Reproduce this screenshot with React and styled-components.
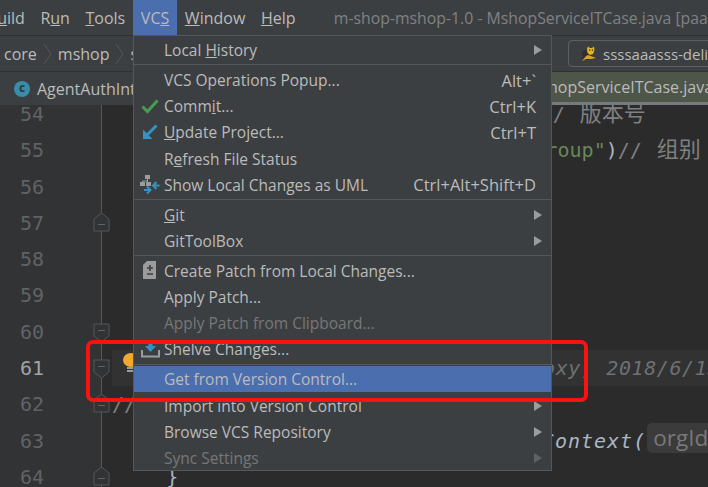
import React from 'react';
import styled, { createGlobalStyle } from 'styled-components';

const GlobalStyle = createGlobalStyle`
  html, body {
    margin: 0;
    padding: 0;
    background: #2b2b2b;
  }
`;

const uiFont = `"Open Sans", "Noto Sans", sans-serif`;
const codeFont = `"DejaVu Sans Mono", "Noto Sans CJK SC", monospace`;

const CheckIcon = () => (
  <svg width="18" height="16" viewBox="0 0 18 16">
    <path d="M1.5 8.5 L6.5 13.5 L16.5 2.5" fill="none" stroke="#499c54" strokeWidth="3" />
  </svg>
);

const UpdateIcon = () => (
  <svg width="18" height="16" viewBox="0 0 18 16">
    <path d="M15.5 1.5 L4 13" fill="none" stroke="#3592c4" strokeWidth="3" />
    <path d="M2 5.5 V15 H11.5 Z" fill="#3592c4" />
  </svg>
);

const UmlIcon = () => (
  <svg width="20" height="20" viewBox="0 0 20 20">
    <rect x="5" y="0" width="5" height="4" fill="#9a9c9e" />
    <rect x="0" y="7" width="5" height="4" fill="#9a9c9e" />
    <rect x="6" y="7" width="5" height="4" fill="#9a9c9e" />
    <path d="M7.5 4 V6 H2.5 V7 M7.5 6 V7" fill="none" stroke="#9a9c9e" strokeWidth="1" />
    <path d="M19.5 10.5 H14 M16.5 7 L13 10.5 L16.5 14" fill="none" stroke="#3592c4" strokeWidth="2" />
    <path d="M4 15 H9.5 M7 11.5 L10.5 15 L7 18.5" fill="none" stroke="#3592c4" strokeWidth="2" />
  </svg>
);

const PatchIcon = () => (
  <svg width="14" height="19" viewBox="0 0 14 19">
    <path d="M4 0 H13 V18 H0 V4 Z" fill="#9a9c9e" />
    <path d="M7 4 V10 M4 7 H10 M4 13 H10" fill="none" stroke="#3c3f41" strokeWidth="1.6" />
  </svg>
);

const ShelveIcon = () => (
  <svg width="19" height="17" viewBox="0 0 19 17">
    <path d="M1 9 V15.5 H18 V9" fill="none" stroke="#9a9c9e" strokeWidth="2" />
    <path d="M7.5 0 H11.5 V5 H15 L9.5 11 L4 5 H7.5 Z" fill="#3592c4" />
  </svg>
);

const icons = {
  check: <CheckIcon />,
  update: <UpdateIcon />,
  uml: <UmlIcon />,
  patch: <PatchIcon />,
  shelve: <ShelveIcon />,
};

const TomcatIcon = () => (
  <svg width="19" height="16" viewBox="0 0 19 16">
    <path d="M1 14 L5 11 L4 6 L7 4 L11 6 L14 10 L18 12 L13 12 L10 14 L6 12 Z" fill="#2f2f2f" />
    <path d="M4 15 L8 10 L10 9 L13 10 L18 12 L13 13 L8 13 Z" fill="#d9a51e" />
    <path d="M9 3 L10 0.5 L12 2 L14 2 L16 0.5 L16.5 4 L15 8 L12 9 L9.5 7 Z" fill="#e6b422" />
    <circle cx="11.6" cy="4" r="0.8" fill="#2b2b2b" />
    <circle cx="14.4" cy="4" r="0.8" fill="#2b2b2b" />
  </svg>
);

const Chevron = () => (
  <svg width="9" height="22" viewBox="0 0 9 22">
    <path d="M1 1 L8 11 L1 21" fill="none" stroke="#55585a" strokeWidth="1" />
  </svg>
);

const FoldMark = ({ dir }) => (
  <FoldSvg $dir={dir} width="17" height="20" viewBox="0 0 17 20">
    {dir === 'up' ? (
      <path d="M8.5 1 L16 7 V19 H1 V7 Z" fill="#313335" stroke="#55585a" />
    ) : (
      <path d="M1 1 H16 V13 L8.5 19 L1 13 Z" fill="#313335" stroke="#55585a" />
    )}
    <path d={dir === 'up' ? 'M5 12.5 H12' : 'M5 7.5 H12'} stroke="#606366" />
  </FoldSvg>
);

// "_" marks the mnemonic letter
const Mnemonic = ({ text }) => {
  const i = text.indexOf('_');
  if (i < 0) return text;
  return (
    <>
      {text.slice(0, i)}
      <u>{text[i + 1]}</u>
      {text.slice(i + 2)}
    </>
  );
};

const menuBar = ['B_uild', 'R_un', '_Tools', 'VC_S', '_Window', '_Help'];

const vcsMenu = [
  { label: 'Local _History', arrow: true },
  { sep: true },
  { label: 'VCS Operations Popup...', keys: 'Alt+`' },
  { label: 'Comm_it...', keys: 'Ctrl+K', icon: 'check' },
  { label: '_Update Project...', keys: 'Ctrl+T', icon: 'update' },
  { label: 'R_efresh File Status' },
  { label: 'Show Local Changes as UML', keys: 'Ctrl+Alt+Shift+D', icon: 'uml' },
  { sep: true },
  { label: '_Git', arrow: true },
  { label: 'GitToolBox', arrow: true },
  { sep: true },
  { label: 'Create Patch from Local Changes...', icon: 'patch' },
  { label: 'Apply Patch...' },
  { label: 'Apply Patch from Clipboard...', disabled: true },
  { label: 'Shelve Changes...', icon: 'shelve' },
  { sep: true },
  { label: 'Get from Version Control...', active: true },
  { label: 'Import into Version Control', arrow: true },
  { label: 'Browse VCS Repository', arrow: true },
  { label: 'Sync Settings', arrow: true, disabled: true },
];

const codeLines = [
  { n: 54, col: 36.6, parts: [['c', '/ '], ['h', '版本号']] },
  { n: 55, col: 35, parts: [['s', 'group"'], ['p', ')'], ['c', '// '], ['h', '组别']] },
  { n: 56 },
  { n: 57, fold: 'up' },
  { n: 58 },
  { n: 59 },
  { n: 60, fold: 'down' },
  { n: 61, fold: 'down', current: true, col: 35.8, parts: [['a', 'oxy, 2018/6/13 10:24']], bulb: true },
  { n: 62, fold: 'up', col: 0, parts: [['c', '//']] },
  { n: 63, col: 35.7, parts: [['m', 'Context(']], hint: 'orgId' },
  { n: 64, fold: 'up', col: 4.5, parts: [['p', '}']] },
];

export default function App() {
  return (
    <Page>
      <GlobalStyle />
      <MenuBar>
        {menuBar.map((m) => (
          <MenuTitle key={m} $open={m === 'VC_S'}>
            <Mnemonic text={m} />
          </MenuTitle>
        ))}
        <WindowTitle>m-shop-mshop-1.0 - MshopServiceITCase.java [paas-mshop]</WindowTitle>
      </MenuBar>

      <NavBar>
        <span>core</span>
        <Chevron />
        <span>mshop</span>
        <Chevron />
        <span>service</span>
        <RunConfig>
          <TomcatIcon />
          <RunName>ssssaaasss-delivery</RunName>
        </RunConfig>
      </NavBar>

      <TabBar>
        <Tab>
          <ClassBadge>c</ClassBadge>
          AgentAuthInterceptor
        </Tab>
        <ActiveTab>MshopServiceITCase.java</ActiveTab>
      </TabBar>

      <Editor>
        <Lines>
          {codeLines.map((line) => (
            <Line key={line.n}>
              <Gutter $current={line.current}>
                {line.n}
                {line.fold && <FoldMark dir={line.fold} />}
              </Gutter>
              <Code $current={line.current} $col={line.col || 0}>
                {line.bulb && <Bulb />}
                {line.parts &&
                  line.parts.map(([kind, text]) => (
                    <Token key={text} $kind={kind}>
                      {text}
                    </Token>
                  ))}
                {line.hint && <Hint>{line.hint}</Hint>}
              </Code>
            </Line>
          ))}
        </Lines>
      </Editor>

      <Dropdown>
        {vcsMenu.map((item, i) =>
          item.sep ? (
            <Separator key={i} />
          ) : (
            <MenuRow key={item.label} $active={item.active} $disabled={item.disabled}>
              <IconSlot>{item.icon && icons[item.icon]}</IconSlot>
              <RowLabel>
                <Mnemonic text={item.label} />
              </RowLabel>
              {item.keys && <Keys>{item.keys}</Keys>}
              {item.arrow && <Arrow $disabled={item.disabled} />}
            </MenuRow>
          )
        )}
      </Dropdown>

      <RedBox />
    </Page>
  );
}

const Page = styled.div`
  position: relative;
  width: 708px;
  height: 487px;
  overflow: hidden;
  display: flex;
  flex-direction: column;
  background: #2b2b2b;
  font-family: ${uiFont};
`;

const MenuBar = styled.div`
  height: 35px;
  flex: none;
  display: flex;
  align-items: stretch;
  background: #3c3f41;
  color: #bbbbbb;
  font-size: 16px;
  white-space: nowrap;
  margin-left: -21px;
`;

const MenuTitle = styled.div`
  display: flex;
  align-items: center;
  white-space: pre;
  padding: 0 7.8px;
  background: ${(p) => (p.$open ? '#4b6eaf' : 'transparent')};
`;

const WindowTitle = styled.div`
  display: flex;
  align-items: center;
  margin-left: 30.5px;
  color: #7f8284;
  font-size: 15.8px;
`;

const NavBar = styled.div`
  height: 36px;
  flex: none;
  display: flex;
  align-items: center;
  gap: 6px;
  padding-left: 4px;
  background: #3c3f41;
  border-top: 1px solid #323232;
  box-sizing: border-box;
  color: #bbbbbb;
  font-size: 16px;
  white-space: nowrap;
  overflow: hidden;
`;

const RunConfig = styled.div`
  flex: none;
  margin-left: auto;
  margin-right: -10px;
  width: 150px;
  height: 27px;
  box-sizing: border-box;
  display: flex;
  align-items: center;
  gap: 6px;
  padding-left: 9px;
  border: 1px solid #5e6060;
  border-radius: 4px;
  overflow: hidden;

  svg {
    flex: none;
  }
`;

const RunName = styled.span`
  color: #bbbbbb;
  font-size: 15px;
`;

const TabBar = styled.div`
  position: relative;
  z-index: 1;
  height: 34px;
  flex: none;
  display: flex;
  justify-content: space-between;
  background: #3c3f41;
  border-top: 1px solid #323232;
  box-sizing: border-box;
  color: #bbbbbb;
  font-size: 16px;
  white-space: nowrap;
  overflow: hidden;
`;

const Tab = styled.div`
  display: flex;
  align-items: center;
  gap: 7px;
  padding-left: 14px;
  padding-top: 1px;
`;

const ClassBadge = styled.span`
  width: 16px;
  height: 16px;
  border-radius: 50%;
  background: #3a8ca8;
  color: #2b3a40;
  font-size: 12px;
  font-weight: 700;
  line-height: 14px;
  text-align: center;
`;

const ActiveTab = styled.div`
  flex: none;
  width: 202px;
  box-sizing: border-box;
  display: flex;
  align-items: center;
  padding-left: 20px;
  background: #4e5549;
  border-bottom: 3px solid #747a80;
  overflow: hidden;
`;

const Editor = styled.div`
  flex: 1;
  min-height: 0;
`;

const Lines = styled.div`
  margin-top: -9px;
  font-family: ${codeFont};
  font-size: 20px;
  white-space: pre;
`;

const Line = styled.div`
  height: 36.3px;
  line-height: 36.3px;
  display: flex;
`;

const Gutter = styled.div`
  position: relative;
  flex: none;
  width: 102px;
  box-sizing: border-box;
  padding-left: 20px;
  background: #313335;
  border-right: 1px solid #555759;
  color: ${(p) => (p.$current ? '#a4a3a3' : '#606366')};
`;

const FoldSvg = styled.svg`
  position: absolute;
  left: 93px;
  top: ${(p) => (p.$dir === 'up' ? '7px' : '9px')};
`;

const Code = styled.div`
  position: relative;
  flex: 1;
  min-width: 0;
  display: flex;
  align-items: center;
  margin-left: 10px;
  padding-left: ${(p) => p.$col}ch;
  background: ${(p) => (p.$current ? '#323232' : 'transparent')};
  height: 36px;
`;

const tokenColors = { c: '#808080', h: '#808080', s: '#6a8759', p: '#a9b7c6', a: '#6e7072', m: '#a9b7c6' };

const Token = styled.span`
  color: ${(p) => tokenColors[p.$kind]};
  font-style: ${(p) => (p.$kind === 'a' || p.$kind === 'm' ? 'italic' : 'normal')};
  font-size: ${(p) => (p.$kind === 'h' ? '22px' : 'inherit')};
  margin-left: ${(p) => (p.$kind === 'h' ? '3px' : '0')};
  letter-spacing: ${(p) => (p.$kind === 'a' ? '0.6px' : p.$kind === 'm' ? '1px' : '0')};
`;

const Hint = styled.span`
  align-self: flex-start;
  margin-left: 1px;
  padding: 0 6px;
  height: 30px;
  line-height: 30px;
  border-radius: 5px;
  background: #3b3b3b;
  color: #787878;
  font-family: ${uiFont};
  font-size: 22.5px;
`;

const Bulb = styled.span`
  position: absolute;
  left: 11px;
  top: 3px;
  width: 16px;
  height: 14px;
  border-radius: 50%;
  background: #f2a72e;

  &::after {
    content: '';
    position: absolute;
    left: 4px;
    top: 14px;
    width: 8px;
    height: 5px;
    background: linear-gradient(#9a9c9e 0 2px, transparent 2px 3px, #9a9c9e 3px);
  }
`;

const Dropdown = styled.div`
  position: absolute;
  z-index: 2;
  left: 133px;
  top: 35px;
  width: 419px;
  height: 436px;
  box-sizing: border-box;
  padding-top: 1px;
  background: #3c3f41;
  border: 1px solid #55585a;
  color: #bbbbbb;
  font-size: 15.5px;
`;

const MenuRow = styled.div`
  height: 26.2px;
  display: flex;
  align-items: center;
  padding-right: 10px;
  white-space: pre;
  background: ${(p) => (p.$active ? '#4b6eaf' : 'transparent')};
  color: ${(p) => (p.$disabled ? '#777777' : '#bbbbbb')};
`;

const IconSlot = styled.span`
  flex: none;
  width: 30px;
  display: flex;
  align-items: center;
  justify-content: center;
  padding-left: 2px;
  box-sizing: border-box;
`;

const RowLabel = styled.span`
  flex: 1;
`;

const Keys = styled.span`
  padding-right: 5px;
  font-size: 16.5px;
`;

const Arrow = styled.span`
  width: 0;
  height: 0;
  margin-right: -1px;
  border-left: 8px solid ${(p) => (p.$disabled ? '#5f6163' : '#9a9c9e')};
  border-top: 5px solid transparent;
  border-bottom: 5px solid transparent;
`;

const Separator = styled.div`
  height: 1px;
  margin: 1px 0 1.75px;
  background: #55585a;
`;

const RedBox = styled.div`
  position: absolute;
  z-index: 3;
  left: 86px;
  top: 340px;
  width: 502px;
  height: 62px;
  box-sizing: border-box;
  border: 4px solid #f5140f;
  border-radius: 7px;
`;
